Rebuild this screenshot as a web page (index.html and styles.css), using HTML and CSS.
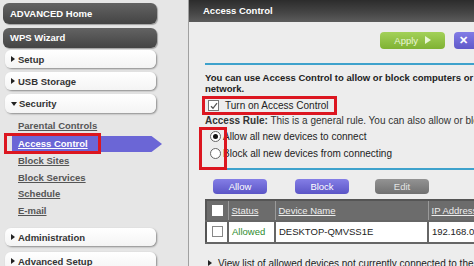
FILE: index.html
```html
<!DOCTYPE html>
<html>
<head>
    <title>Access Control</title>
    <meta charset="UTF-8">
    <link rel="stylesheet" href="styles.css">
</head>
<body>
<div class="page">
    <nav class="sidebar">
        <div class="nav-dark first">ADVANCED Home</div>
        <div class="nav-dark second">WPS Wizard</div>
        <div class="nav-light"><span class="tri-right"></span>Setup</div>
        <div class="nav-light"><span class="tri-right"></span>USB Storage</div>
        <div class="nav-light security"><span class="tri-down"></span>Security</div>
        <ul class="submenu">
            <li><a>Parental Controls</a></li>
            <li class="active"><a>Access Control</a><span class="mark-nav"></span></li>
            <li><a>Block Sites</a></li>
            <li><a>Block Services</a></li>
            <li><a>Schedule</a></li>
            <li><a>E-mail</a></li>
        </ul>
        <div class="nav-light admin"><span class="tri-right"></span>Administration</div>
        <div class="nav-light"><span class="tri-right"></span>Advanced Setup</div>
    </nav>

    <main class="content">
        <header class="panel-title">Access Control</header>
        <div class="toolbar">
            <button class="btn-apply">Apply <span class="tri-apply"></span></button>
            <button class="btn-cancel">&#10005;</button>
        </div>
        <div class="panel-body">
            <div class="blue-line"></div>
            <p class="intro">You can use Access Control to allow or block computers or other devices from accessing your<br>network.</p>
            <div class="turn-on">
                <span class="check">
                    <svg width="8" height="8" viewBox="0 0 8 8"><path d="M1 4.2 L3 6.3 L7 1.2" fill="none" stroke="#555" stroke-width="1.3"/></svg>
                </span>
                Turn on Access Control
            </div>
            <p class="rule-text"><b>Access Rule:</b> This is a general rule. You can also allow or block individual devices below.</p>
            <div class="radios">
                <div class="radio-row"><span class="radio on"></span>Allow all new devices to connect</div>
                <div class="radio-row"><span class="radio"></span>Block all new devices from connecting</div>
                <span class="mark-radios"></span>
            </div>
            <div class="blue-line second"></div>
            <div class="actions">
                <button class="btn-purple">Allow</button>
                <button class="btn-purple">Block</button>
                <button class="btn-gray">Edit</button>
            </div>
            <table class="devices">
                <tr class="head">
                    <th class="col-check"><span class="box white"></span></th>
                    <th class="col-status"><u>Status</u></th>
                    <th class="col-name"><u>Device Name</u></th>
                    <th class="col-ip"><u>IP Address</u></th>
                </tr>
                <tr>
                    <td class="col-check"><span class="box"></span></td>
                    <td class="allowed">Allowed</td>
                    <td>DESKTOP-QMVSS1E</td>
                    <td>192.168.0.12</td>
                </tr>
            </table>
            <div class="view-list"><span class="tri-right"></span>View list of allowed devices not currently connected to the network</div>
        </div>
    </main>
</div>
</body>
</html>
```

FILE: styles.css
```css
body {
    margin: 0;
    width: 474px;
    height: 266px;
    overflow: hidden;
    font-family: "Liberation Sans", Arial, sans-serif;
    background-color: #e6e6e6;
    color: #222;
}
.page {
    display: grid;
    grid-template-columns: 188px 300px;
    height: 266px;
}

/* left menu */
.sidebar {
    padding-top: 3px;
}
.nav-dark {
    margin-left: 3px;
    width: 147px;
    height: 21px;
    line-height: 21px;
    padding-left: 7px;
    border-radius: 6px;
    background: linear-gradient(#636363, #444);
    box-shadow: 1px 1px 1px rgba(0,0,0,0.3);
    color: white;
    font-size: 9.5px;
    font-weight: bold;
}
.nav-dark.first {
    margin-bottom: 4px;
}
.nav-dark.second {
    height: 20px;
    line-height: 20px;
    margin-bottom: 2px;
}
.nav-light {
    display: flex;
    align-items: center;
    margin-left: 5px;
    margin-bottom: 4px;
    width: 145px;
    height: 18px;
    padding-left: 6px;
    border-radius: 6px;
    background: linear-gradient(#fff, #f4f4f4);
    box-shadow: 1px 1px 2px rgba(0,0,0,0.4);
    color: #333;
    font-size: 9.5px;
    font-weight: bold;
}
.nav-light.security {
    height: 19px;
    margin-bottom: 0;
}
.nav-light.admin {
    margin-top: 9px;
    margin-bottom: 6px;
}
.tri-right {
    display: inline-block;
    width: 0;
    height: 0;
    border-left: 4px solid #222;
    border-top: 3px solid transparent;
    border-bottom: 3px solid transparent;
    margin-right: 3px;
}
.tri-down {
    display: inline-block;
    width: 0;
    height: 0;
    border-top: 4px solid #222;
    border-left: 3px solid transparent;
    border-right: 3px solid transparent;
    margin-right: 2px;
}
.submenu {
    list-style: none;
    margin: 0;
    padding: 4.5px 0 0 0;
}
.submenu li {
    height: 16.5px;
    line-height: 16.5px;
    padding-left: 18px;
    font-size: 9.5px;
    font-weight: bold;
}
.submenu a {
    color: #555;
    text-decoration: underline;
}
.submenu li.active {
    position: relative;
    height: 19px;
    padding: 2px 0 0 0;
    box-sizing: border-box;
}
.submenu li.active a {
    display: block;
    margin-left: 12px;
    padding-left: 6px;
    width: 144px;
    height: 16px;
    line-height: 16px;
    background-color: #6b66d6;
    clip-path: polygon(0 0, 93% 0, 100% 50%, 93% 100%, 0 100%);
    color: white;
}
.mark-nav {
    position: absolute;
    left: 4px;
    top: -1px;
    width: 97px;
    height: 21px;
    box-sizing: border-box;
    border: 3px solid #dc1620;
}

/* main panel */
.content {
    border-left: 1px solid #a0a0a0;
    background-color: #ededed;
}
.panel-title {
    height: 22px;
    line-height: 22px;
    padding-left: 14px;
    background: linear-gradient(#2c2c2c, #444 55%, #5c5c5c);
    color: white;
    font-size: 9.5px;
    font-weight: bold;
}
.toolbar {
    display: flex;
    justify-content: flex-end;
    gap: 9px;
    padding: 10px 4px 0 0;
    height: 31px;
    box-sizing: border-box;
}
.toolbar button {
    height: 17px;
    border: none;
    border-radius: 4px;
    font-family: inherit;
    padding: 0;
}
.btn-apply {
    width: 65px;
    background: linear-gradient(#a3d159, #7fb233);
    color: #e9f6d6;
    font-size: 9.5px;
}
.tri-apply {
    display: inline-block;
    width: 0;
    height: 0;
    border-left: 6px solid #e9f6d6;
    border-top: 4px solid transparent;
    border-bottom: 4px solid transparent;
    margin-left: 4px;
}
.btn-cancel {
    width: 30px;
    background: linear-gradient(#827ce6, #5f59c9);
    color: white;
    font-size: 11px;
    font-weight: bold;
    text-align: left;
    padding-left: 5px !important;
}
.panel-body {
    padding-left: 16px;
}
.blue-line {
    height: 2px;
    background-color: #3ea2cc;
    margin-top: 10px;
}
.blue-line.second {
    margin-top: 5.5px;
}
.intro {
    margin: 6.5px 0 0 0;
    font-size: 9.5px;
    font-weight: bold;
    line-height: 11px;
    white-space: nowrap;
}
.turn-on {
    display: flex;
    align-items: center;
    gap: 6px;
    margin: 2.5px 0 0 -3px;
    width: 135px;
    height: 19px;
    box-sizing: border-box;
    border: 3px solid #dc1620;
    padding-left: 3px;
    font-size: 10px;
}
.check {
    display: flex;
    align-items: center;
    justify-content: center;
    width: 9px;
    height: 9px;
    border: 1px solid #777;
    background-color: white;
}
.rule-text {
    margin: 0;
    height: 11px;
    line-height: 11px;
    font-size: 10px;
    white-space: nowrap;
    color: #333;
}
.radios {
    position: relative;
    margin-top: 2px;
}
.radio-row {
    display: flex;
    align-items: center;
    gap: 2px;
    height: 17px;
    padding-left: 5px;
    font-size: 10px;
    color: #222;
}
.radio {
    width: 9px;
    height: 9px;
    border: 1px solid #666;
    border-radius: 50%;
    background-color: white;
    position: relative;
}
.radio.on::after {
    content: "";
    position: absolute;
    left: 2px;
    top: 2px;
    width: 5px;
    height: 5px;
    border-radius: 50%;
    background-color: #111;
}
.mark-radios {
    position: absolute;
    left: -6px;
    top: -1.5px;
    width: 28px;
    height: 43px;
    box-sizing: border-box;
    border: 3px solid #dc1620;
}
.actions {
    display: flex;
    gap: 28px;
    margin: 9px 0 0 8px;
}
.actions button {
    width: 54px;
    height: 15px;
    border: none;
    border-radius: 4px;
    padding: 0;
    font-family: inherit;
    font-size: 9.5px;
}
.btn-purple {
    background: linear-gradient(#847ee6, #5b55c6);
    color: white;
}
.btn-gray {
    margin-left: -2px;
    background: linear-gradient(#939393, #707070);
    color: #e4e4e4;
}
.devices {
    margin-top: 5px;
    border-collapse: collapse;
    border: 2px solid #555;
    width: 290px;
    font-size: 9.5px;
}
.devices th {
    height: 19px;
    padding: 0 0 0 3px;
    background-color: #6c6c6c;
    color: #eee;
    font-weight: normal;
    text-align: left;
    border-left: 1px solid #9a9a9a;
}
.devices td {
    height: 20px;
    padding: 0 0 0 3px;
    background-color: white;
    border: 2px solid #666;
}
.devices .col-check {
    width: 20px;
    padding: 0;
    text-align: center;
    border-left: none;
}
.col-status {
    width: 43px;
}
.col-name {
    width: 149px;
}
.box {
    display: inline-block;
    width: 9px;
    height: 9px;
    border: 1px solid #888;
    background-color: white;
    vertical-align: middle;
}
.box.white {
    border-color: white;
}
.allowed {
    color: #2e8b2e;
}
.view-list {
    display: flex;
    align-items: center;
    gap: 3px;
    margin: 14px 0 0 3px;
    font-size: 10px;
    white-space: nowrap;
    color: #222;
}
```
